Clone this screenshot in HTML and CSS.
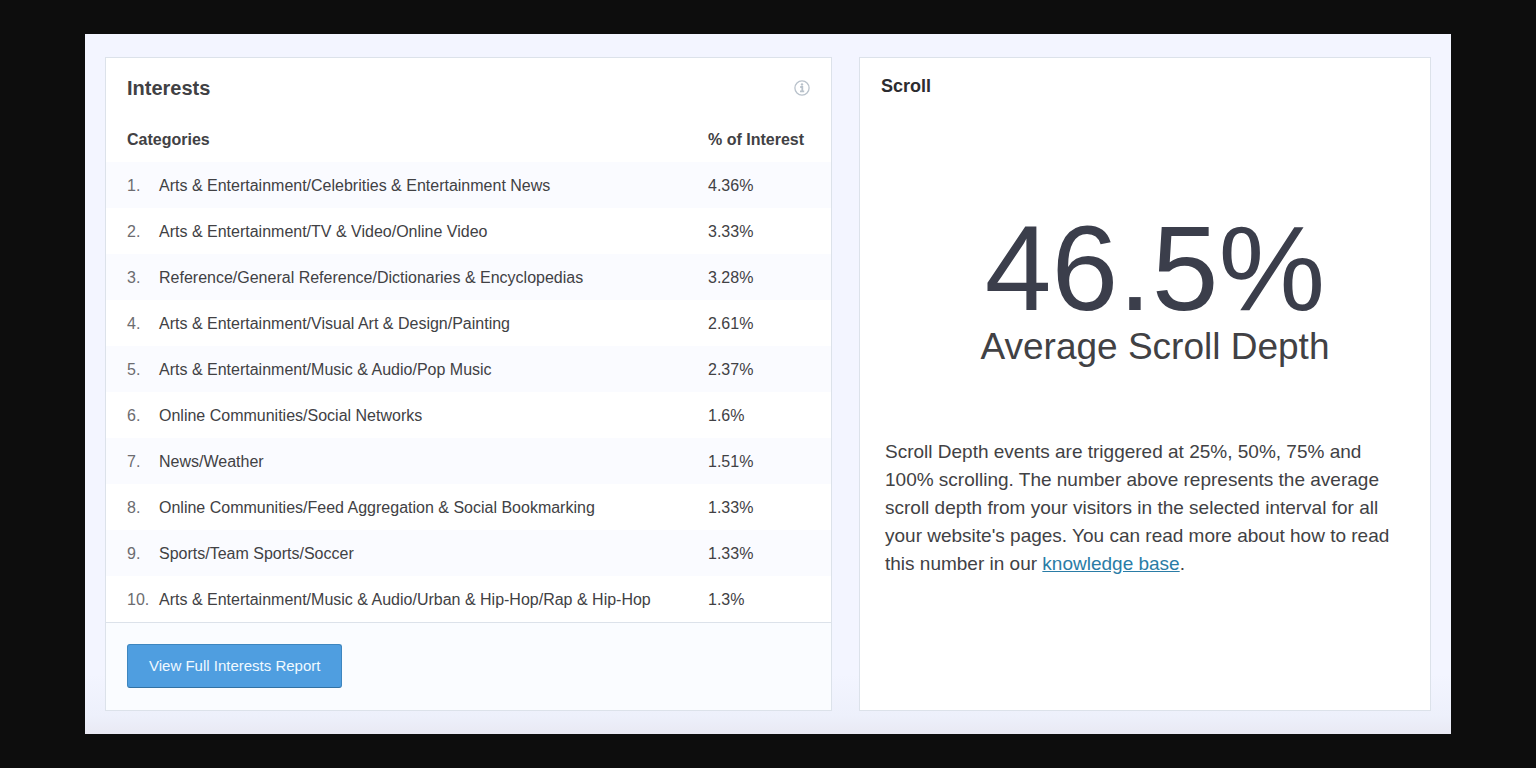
FILE: index.html
```html
<!DOCTYPE html>
<html lang="en">
<head>
<meta charset="utf-8">
<meta name="viewport" content="width=device-width, initial-scale=1">
<title>Interests and Scroll</title>
<link rel="stylesheet" href="styles.css">
</head>
<body>
<main class="dashboard">
  <section class="card interests">
    <header class="card-header">
      <h2 class="card-title">Interests</h2>
      <button class="info" type="button" aria-label="About interests">
        <svg width="16" height="16" viewBox="0 0 16 16" fill="none" stroke="#b9c2cb">
          <circle cx="8" cy="8" r="7.1" stroke-width="1.3"/>
          <path d="M6.2 7H8.3V11.4M6 11.4H10.2" stroke-width="1.8"/>
          <circle cx="8" cy="4.4" r="1.2" fill="#b9c2cb" stroke="none"/>
        </svg>
      </button>
    </header>
    <table class="table">
      <thead>
        <tr><th colspan="2" scope="col">Categories</th><th class="value" scope="col">% of Interest</th></tr>
      </thead>
      <tbody>
        <tr><td class="rank">1.</td><td>Arts &amp; Entertainment/Celebrities &amp; Entertainment News</td><td>4.36%</td></tr>
        <tr><td class="rank">2.</td><td>Arts &amp; Entertainment/TV &amp; Video/Online Video</td><td>3.33%</td></tr>
        <tr><td class="rank">3.</td><td>Reference/General Reference/Dictionaries &amp; Encyclopedias</td><td>3.28%</td></tr>
        <tr><td class="rank">4.</td><td>Arts &amp; Entertainment/Visual Art &amp; Design/Painting</td><td>2.61%</td></tr>
        <tr><td class="rank">5.</td><td>Arts &amp; Entertainment/Music &amp; Audio/Pop Music</td><td>2.37%</td></tr>
        <tr><td class="rank">6.</td><td>Online Communities/Social Networks</td><td>1.6%</td></tr>
        <tr><td class="rank">7.</td><td>News/Weather</td><td>1.51%</td></tr>
        <tr><td class="rank">8.</td><td>Online Communities/Feed Aggregation &amp; Social Bookmarking</td><td>1.33%</td></tr>
        <tr><td class="rank">9.</td><td>Sports/Team Sports/Soccer</td><td>1.33%</td></tr>
        <tr><td class="rank">10.</td><td>Arts &amp; Entertainment/Music &amp; Audio/Urban &amp; Hip-Hop/Rap &amp; Hip-Hop</td><td>1.3%</td></tr>
      </tbody>
    </table>
    <footer class="card-footer">
      <button class="report" type="button">View Full Interests Report</button>
    </footer>
  </section>
  <section class="card scroll">
    <h2 class="scroll-title">Scroll</h2>
    <div class="metric">
      <p class="metric-value">46.5%</p>
      <p class="metric-label">Average Scroll Depth</p>
    </div>
    <p class="description">Scroll Depth events are triggered at 25%, 50%, 75% and 100% scrolling. The number above represents the average scroll depth from your visitors in the selected interval for all your website's pages. You can read more about how to read this number in our <a class="link" href="#knowledge-base">knowledge base</a>.</p>
  </section>
</main>
</body>
</html>
```
FILE: styles.css
```css
* {
  box-sizing: border-box;
}

body {
  margin: 0;
  padding: 34px 85px;
  background: #0d0d0d;
  color: #414144;
  font: 16px/24px "Liberation Sans", Arial, sans-serif;
}

h2,
p {
  margin: 0;
}

.dashboard {
  display: grid;
  grid-template-columns: 727fr 572fr;
  gap: 27px;
  padding: 23px 20px;
  background: linear-gradient(to top, #e9e9f3, #edf0fb 18px, #f3f5ff 60px);
}

.card {
  display: flex;
  flex-direction: column;
  border: 1px solid #dce2ea;
  background: #fff;
}

.card-header {
  display: flex;
  align-items: center;
  justify-content: space-between;
  padding: 18px 21px 16px;
}

.card-title {
  font-size: 20px;
  line-height: 24px;
}

.info {
  display: flex;
  padding: 0;
  border: 0;
  background: none;
}

.table {
  width: 100%;
  border-collapse: collapse;
  table-layout: auto;
}

.table th,
.table td {
  height: 46px;
  padding: 2px 0 0;
  text-align: left;
}

.table .value {
  width: 123px;
}

.table th:first-child,
.table .rank {
  padding-left: 21px;
}

.table .rank {
  width: 53px;
  color: #6c6c70;
}

.table tbody tr:nth-child(odd) {
  background: #fafbff;
}

.card-footer {
  flex: 1;
  padding: 21px 21px 22px;
  border-top: 1px solid #dce2ea;
  background: #fafcff;
}

.report {
  display: block;
  padding: 9px 21px;
  border: 1px solid #3d86bf;
  border-bottom-color: #3272a4;
  border-radius: 3px;
  background: #4f9ee0;
  color: #f0f9ff;
  font: 15px/24px "Liberation Sans", Arial, sans-serif;
}

.scroll {
  padding: 16px 21px;
}

.scroll-title {
  color: #2c2c30;
  font-size: 18px;
  line-height: 24px;
}

.metric {
  padding: 110px 0 72px 20px;
  color: #3b3e4b;
  text-align: center;
}

.metric-value {
  font-size: 120px;
  line-height: 120px;
}

.metric-label {
  color: #414144;
  font-size: 37px;
  line-height: 38px;
}

.description {
  padding: 0 4px;
  font-size: 19px;
  line-height: 28px;
}

.link {
  color: #2a7ca6;
}
```
